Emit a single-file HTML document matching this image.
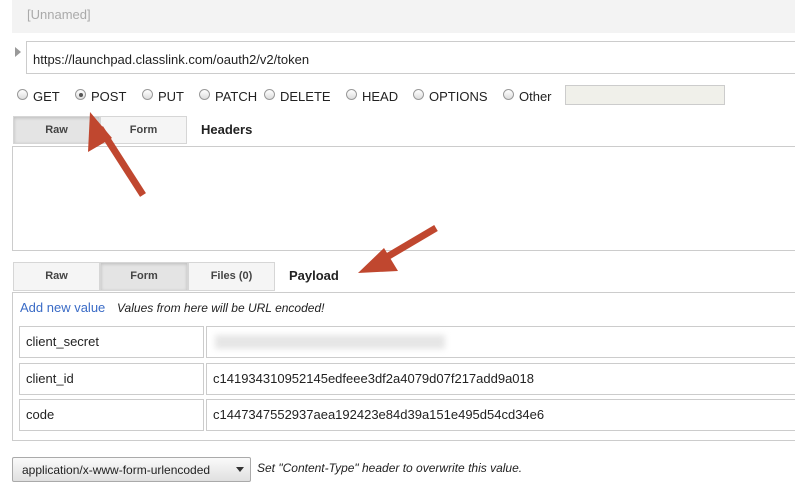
<html><head><style>
body{margin:0;width:795px;height:502px;background:#fff;font-family:"Liberation Sans",Arial,sans-serif;position:relative;overflow:hidden;font-size:13px;color:#222}
.a{position:absolute}
.tab{position:absolute;border:1px solid #d6d6d6;background:#f5f5f5;font-size:11px;font-weight:bold;color:#444;text-align:center;box-sizing:border-box}
.on{background:#e4e4e4;box-shadow:inset 0 1px 3px #bbb}
.r{position:absolute;width:11px;height:11px;border:1px solid #999;border-radius:50%;background:linear-gradient(#fff,#ddd);box-sizing:border-box}
.cell{position:absolute;border:1px solid #ccc;box-sizing:border-box;padding-left:6px;line-height:30px}
</style></head><body>
<div class="a" style="left:12px;top:0;width:783px;height:33px;background:#f3f3f3"></div>
<div class="a" style="left:27px;top:7px;color:#aaa;font-size:13px">[Unnamed]</div>
<div class="a" style="left:15px;top:47px;width:0;height:0;border-left:6px solid #999;border-top:5px solid transparent;border-bottom:5px solid transparent"></div>
<div class="a" style="left:26px;top:41px;width:780px;height:33px;border:1px solid #ccc;box-sizing:border-box;padding:10px 6px;font-size:13px">https://launchpad.classlink.com/oauth2/v2/token</div>
<div class="r" style="left:17px;top:89px"></div><div class="a" style="left:33px;top:89px">GET</div>
<div class="r" style="left:75px;top:89px"></div><div class="a" style="left:79px;top:93px;width:4px;height:4px;border-radius:50%;background:#555"></div><div class="a" style="left:91px;top:89px">POST</div>
<div class="r" style="left:142px;top:89px"></div><div class="a" style="left:158px;top:89px">PUT</div>
<div class="r" style="left:199px;top:89px"></div><div class="a" style="left:215px;top:89px">PATCH</div>
<div class="r" style="left:264px;top:89px"></div><div class="a" style="left:280px;top:89px">DELETE</div>
<div class="r" style="left:346px;top:89px"></div><div class="a" style="left:362px;top:89px">HEAD</div>
<div class="r" style="left:413px;top:89px"></div><div class="a" style="left:429px;top:89px">OPTIONS</div>
<div class="r" style="left:503px;top:89px"></div><div class="a" style="left:519px;top:89px">Other</div>
<div class="a" style="left:565px;top:85px;width:160px;height:20px;border:1px solid #ccc;background:#f0f0ea;box-sizing:border-box"></div>
<div class="tab on" style="left:13px;top:116px;width:87px;height:28px;line-height:26px">Raw</div>
<div class="tab" style="left:100px;top:116px;width:87px;height:28px;line-height:26px">Form</div>
<div class="a" style="left:201px;top:122px;font-weight:bold;font-size:13px">Headers</div>
<div class="a" style="left:12px;top:146px;width:790px;height:105px;border:1px solid #ccc;box-sizing:border-box"></div>
<div class="tab" style="left:13px;top:262px;width:87px;height:29px;line-height:27px">Raw</div>
<div class="tab on" style="left:100px;top:262px;width:88px;height:29px;line-height:27px">Form</div>
<div class="tab" style="left:188px;top:262px;width:87px;height:29px;line-height:27px">Files (0)</div>
<div class="a" style="left:289px;top:268px;font-weight:bold;font-size:13px">Payload</div>
<div class="a" style="left:12px;top:292px;width:790px;height:149px;border:1px solid #ccc;box-sizing:border-box"></div>
<div class="a" style="left:20px;top:300px;color:#3a6bc6">Add new value</div>
<div class="a" style="left:117px;top:301px;font-style:italic;font-size:12px">Values from here will be URL encoded!</div>
<div class="cell" style="left:19px;top:326px;width:185px;height:32px">client_secret</div>
<div class="cell" style="left:206px;top:326px;width:600px;height:32px"><div class="a" style="left:8px;top:8px;width:230px;height:14px;background:#e6e6e6;filter:blur(3px)"></div></div>
<div class="cell" style="left:19px;top:363px;width:185px;height:32px">client_id</div>
<div class="cell" style="left:206px;top:363px;width:600px;height:32px">c141934310952145edfeee3df2a4079d07f217add9a018</div>
<div class="cell" style="left:19px;top:399px;width:185px;height:32px">code</div>
<div class="cell" style="left:206px;top:399px;width:600px;height:32px">c1447347552937aea192423e84d39a151e495d54cd34e6</div>
<div class="a" style="left:12px;top:457px;width:239px;height:25px;border:1px solid #aaa;border-radius:2px;background:linear-gradient(#fafafa,#e0e0e0);box-sizing:border-box;padding:5px 9px;font-size:12px">application/x-www-form-urlencoded</div>
<div class="a" style="left:236px;top:467px;border-top:5px solid #333;border-left:4px solid transparent;border-right:4px solid transparent"></div>
<div class="a" style="left:257px;top:461px;font-style:italic;font-size:12px">Set "Content-Type" header to overwrite this value.</div>
<svg class="a" style="left:0;top:0" width="795" height="502">
<g fill="#c0472f" stroke="#c0472f">
<line x1="143" y1="195" x2="100" y2="128" stroke-width="7"/>
<polygon points="90,112 88,152 112,138" stroke="none"/>
<line x1="436" y1="228" x2="375" y2="264" stroke-width="7"/>
<polygon points="358,273 398,271 384,248" stroke="none"/>
</g></svg>
</body></html>
